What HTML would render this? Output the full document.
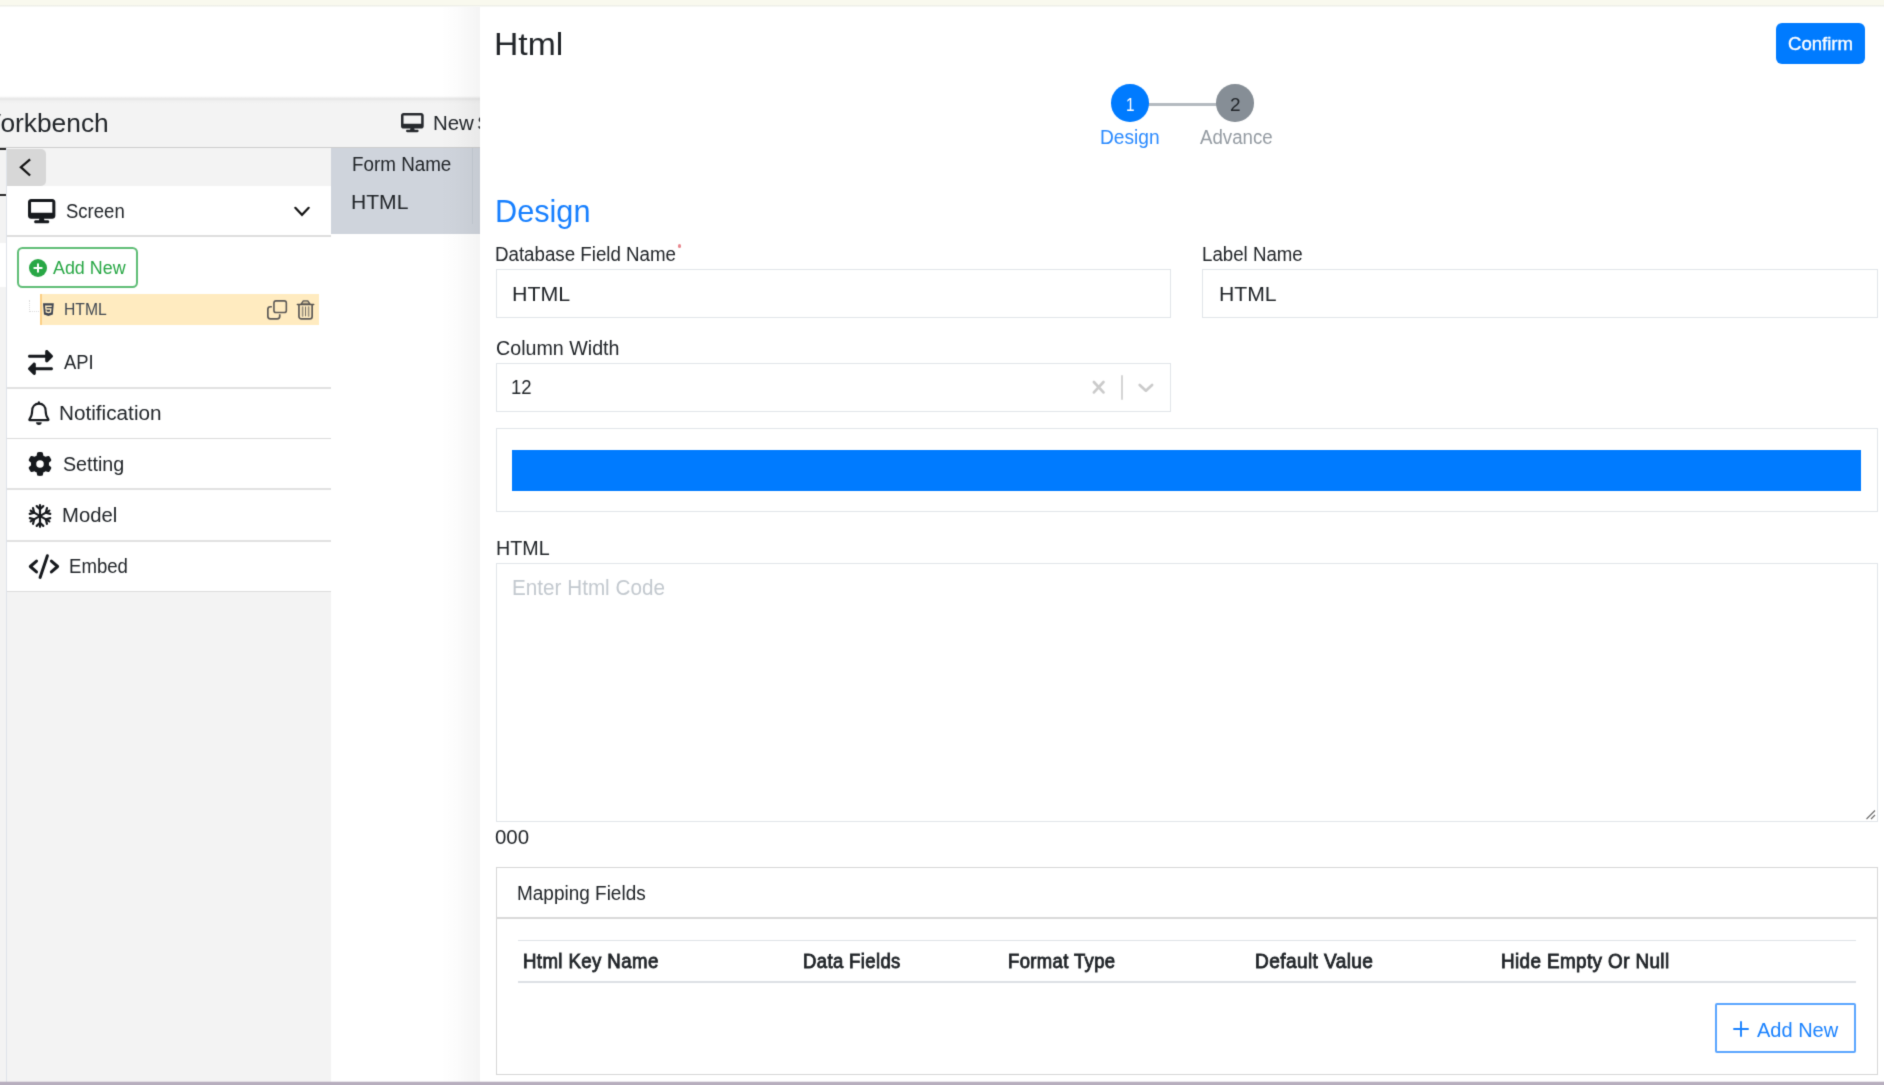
<!DOCTYPE html>
<html><head><meta charset="utf-8"><title>Html</title>
<style>
*{margin:0;padding:0;box-sizing:border-box}
html,body{width:1884px;height:1085px;overflow:hidden;background:#fff;font-family:"Liberation Sans",sans-serif}
body{position:relative;filter:url(#soft)}
.a{position:absolute}
.t{position:absolute;white-space:nowrap;line-height:1;display:inline-block;transform-origin:0 50%}
svg{position:absolute;overflow:visible}

</style></head>
<body>
<svg width="0" height="0" style="position:absolute;left:0;top:0"><defs><filter id="soft" x="0" y="0" width="100%" height="100%" filterUnits="objectBoundingBox" color-interpolation-filters="sRGB"><feConvolveMatrix order="3" kernelMatrix="0.0169 0.0962 0.0169 0.0962 0.5476 0.0962 0.0169 0.0962 0.0169" divisor="1" edgeMode="duplicate" preserveAlpha="true"/></filter></defs></svg>
<!-- ===== left / background app ===== -->
<div class="a" style="left:0;top:0;width:1884px;height:5px;background:#f9f9ee"></div>
<div class="a" style="left:0;top:5px;width:1884px;height:2px;background:linear-gradient(#ebece3,#fafaf8)"></div>

<!-- workbench bar -->
<div class="a" style="left:0;top:95.5px;width:480px;height:8.5px;background:linear-gradient(#fff 0%,#f1f1f1 20%,#e5e5e5 37%,#ececec 52%,#f0f0f0 66%,#f3f3f3 100%)"></div>
<div class="a" style="left:0;top:104px;width:480px;height:44px;background:#f3f3f3"></div>
<div class="a" style="left:0;top:146.9px;width:480px;height:1.4px;background:#cdcdcd"></div>

<!-- far-left strip -->
<div class="a" style="left:0;top:148px;width:7px;height:937px;background:#f3f3f3"></div>
<div class="a" style="left:0;top:243.4px;width:7px;height:43.8px;background:#fff"></div>
<div class="a" style="left:0;top:148px;width:5.5px;height:2px;background:#2a2a2a"></div>
<div class="a" style="left:0;top:194.2px;width:5.5px;height:2px;background:#2a2a2a"></div>
<div class="a" style="left:6px;top:148px;width:1px;height:937px;background:#dfe3ea"></div>

<!-- sidebar -->
<div class="a" style="left:7px;top:148px;width:324px;height:38px;background:#f3f3f3"></div>
<div class="a" style="left:7px;top:148.5px;width:38.5px;height:37px;background:#d7d7d7;border-radius:0 5px 5px 0"></div>
<svg style="left:18px;top:157px" width="16" height="21" viewBox="0 0 16 21"><polyline points="12.1,2.3 2.9,10.2 12.1,18.5" fill="none" stroke="#151515" stroke-width="2.3" stroke-linecap="butt" stroke-linejoin="miter"/></svg>

<div class="a" style="left:7px;top:185.5px;width:324px;height:50px;background:#fff"></div>
<div class="a" style="left:7px;top:235px;width:324px;height:2px;background:#dedede"></div>
<!-- sidebar grey bottom -->
<div class="a" style="left:7px;top:592px;width:324px;height:493px;background:#f3f3f3"></div>
<!-- row borders -->
<div class="a" style="left:7px;top:386.5px;width:324px;height:2px;background:#e1e1e1"></div>
<div class="a" style="left:7px;top:437.5px;width:324px;height:1.5px;background:#dcdcdc"></div>
<div class="a" style="left:7px;top:488.2px;width:324px;height:2px;background:#e1e1e1"></div>
<div class="a" style="left:7px;top:540px;width:324px;height:2px;background:#e1e1e1"></div>
<div class="a" style="left:7px;top:590.5px;width:324px;height:1.5px;background:#dcdcdc"></div>

<!-- form name panel -->
<div class="a" style="left:331px;top:148px;width:149px;height:86px;background:#cfd4dc"></div>
<div class="a" style="left:472px;top:148px;width:1px;height:76px;background:#c4cad3"></div>

<!-- Add New (sidebar) -->
<div class="a" style="left:17.3px;top:246.8px;width:120.4px;height:41px;border:2px solid #5fbd76;border-radius:5.5px;background:#fff"></div>
<!-- tree item -->
<div class="a" style="left:40.5px;top:294.2px;width:278.5px;height:30.8px;background:#ffebc0"></div>
<div class="a" style="left:40.4px;top:294.2px;width:1.9px;height:30.8px;background:#fccf85"></div>
<div class="a" style="left:29.3px;top:299.500px;width:9.700px;height:12.500px;border-left:1px dotted #dcdcdc;border-bottom:1px dotted #dcdcdc"></div>

<!-- monitor (topbar New S) 401-423 -->
<svg style="left:401px;top:112.7px" width="22.700" height="19.200" viewBox="0 0 576 512" preserveAspectRatio="none"><path fill="#26292d" d="M64 0C28.7 0 0 28.7 0 64V352c0 35.3 28.7 64 64 64H240l-10.700 32H160c-17.700 0-32 14.300-32 32s14.300 32 32 32H416c17.700 0 32-14.300 32-32s-14.300-32-32-32H346.700L336 416H512c35.300 0 64-28.700 64-64V64c0-35.300-28.700-64-64-64H64zM512 64V288H64V64H512z"/></svg>
<!-- monitor (Screen row) x 27.9-55.2, y 199-223.3 -->
<svg style="left:27.9px;top:199px" width="27.4" height="24.3" viewBox="0 0 576 512"><path fill="#16191d" d="M64 0C28.7 0 0 28.7 0 64V352c0 35.3 28.7 64 64 64H240l-10.700 32H160c-17.700 0-32 14.300-32 32s14.300 32 32 32H416c17.700 0 32-14.300 32-32s-14.300-32-32-32H346.700L336 416H512c35.300 0 64-28.700 64-64V64c0-35.300-28.700-64-64-64H64zM512 64V288H64V64H512z"/></svg>
<!-- chevron down x 294.5-309.5, y 207-216 -->
<svg style="left:293px;top:205px" width="18" height="13" viewBox="0 0 18 13"><polyline points="2.3,2.8 9,9.8 15.700,2.8" fill="none" stroke="#151515" stroke-width="2.2" stroke-linecap="round" stroke-linejoin="miter"/></svg>
<!-- plus circle x 29.25-47, y 258.75-277 -->
<svg style="left:29.2px;top:258.8px" width="18" height="18" viewBox="0 0 18 18"><circle cx="9" cy="9" r="9" fill="#28a745"/><path d="M9 5.300V12.700M5.300 9H12.700" stroke="#fff" stroke-width="2" stroke-linecap="round"/></svg>
<!-- html5 shield x 43-53.75, y 303.25-316.25 -->
<svg style="left:43px;top:303.2px" width="10.8" height="13.2" viewBox="0 0 384 448"><path fill="#3f4552" d="M0 0l34.900 395.800L191.500 448l157.600-52.200L384 0H0zm308.200 127.900H124.400l4.100 49.400h175.600l-13.600 148.400-97.900 27v.3h-1.100l-98.700-27.300-6-75.800h47.700L138 288l53.500 14.500 53.700-14.500 6-62.200H84.300L71.500 80.200h241.600l-4.900 47.700z"/></svg>
<!-- copy x 267.5-286.75, y 301.25-319.5 -->
<svg style="left:266.9px;top:300px" width="20.2" height="19.8" viewBox="0 0 20.2 19.8"><rect x="6.950" y="0.850" width="12.400" height="11.700" rx="2.100" fill="none" stroke="#5d5a57" stroke-width="1.600"/><path d="M4.900 6.750H3.400A2.550 2.550 0 0 0 0.850 9.300V16.300A2.550 2.550 0 0 0 3.400 18.850H10.200A2.550 2.550 0 0 0 12.750 16.300V14.200" fill="none" stroke="#5d5a57" stroke-width="1.700"/></svg>
<!-- trash x 297.5-313, y 300.75-319 -->
<svg style="left:297px;top:300px" width="17" height="19.800" viewBox="0 0 17 19.800"><path d="M3.900 4.300L6.300 0.900H10.800L13.200 4.300Z" stroke="#5d5a57" stroke-width="1.400" fill="rgba(90,80,60,0.250)" stroke-linejoin="round"/><path d="M0.400 4.450H16.700" stroke="#55524f" stroke-width="1.500" fill="none" stroke-linecap="round"/><path d="M1.950 4.600V16.400A2.450 2.450 0 0 0 4.400 18.850H12.700A2.450 2.450 0 0 0 15.150 16.400V4.600" stroke="#5d5a57" stroke-width="1.700" fill="none"/><path d="M5.600 7V15.900M11.600 7V15.900" stroke="#9a917f" stroke-width="1.700" fill="none" stroke-linecap="round"/><path d="M8.550 7V15.900" stroke="#5d5a57" stroke-width="0.900" fill="none" stroke-linecap="round"/></svg>
<!-- exchange arrows x 27.5-52.5, y 350-373.75 -->
<svg style="left:27.5px;top:349.6px" width="25" height="25" viewBox="0 0 512 512"><path fill="#16191d" d="M32 96l320 0V32c0-12.900 7.800-24.600 19.800-29.600s25.700-2.200 34.900 6.900l96 96c6 6 9.400 14.100 9.400 22.600s-3.400 16.600-9.400 22.600l-96 96c-9.200 9.200-22.900 11.900-34.900 6.900s-19.800-16.600-19.800-29.600V160L32 160c-17.700 0-32-14.300-32-32s14.300-32 32-32zM480 352c17.700 0 32 14.300 32 32s-14.300 32-32 32l-320 0v64c0 12.900-7.800 24.600-19.800 29.600s-25.700 2.200-34.900-6.900l-96-96c-6-6-9.400-14.100-9.400-22.600s3.400-16.600 9.400-22.600l96-96c9.200-9.200 22.900-11.900 34.900-6.900s19.800 16.600 19.800 29.600l0 64 320 0z"/></svg>
<!-- bell x 27.5-49.25, y 401-425 -->
<svg style="left:27.500px;top:401px" width="21.800" height="24.500" viewBox="0 0 21.800 24.500"><g fill="none" stroke="#16191d" stroke-linecap="round" stroke-linejoin="round"><path stroke-width="2.100" d="M10.900 2.400V1.200"/><path stroke-width="2.100" d="M10.900 2.600C6.700 2.600 4.200 5.700 4.200 9.600C4.200 14.400 2.900 16.500 1.400 18.300C1.200 18.600 1.300 19.100 1.800 19.100H20C20.500 19.100 20.600 18.600 20.400 18.300C18.900 16.500 17.600 14.400 17.600 9.600C17.600 5.700 15.100 2.600 10.900 2.600Z"/></g><path d="M8.100 21.300H13.700A2.800 2.800 0 0 1 8.100 21.300Z" fill="#16191d"/></svg>
<!-- gear x 28-52, y 452-476 -->
<svg style="left:28px;top:452px" width="24" height="24" viewBox="0 0 512 512"><path fill="#16191d" d="M495.900 166.600c3.200 8.700 .5 18.400-6.400 24.600l-43.300 39.400c1.100 8.300 1.700 16.800 1.700 25.400s-.6 17.100-1.700 25.400l43.300 39.400c6.900 6.200 9.600 15.900 6.400 24.600c-4.400 11.900-9.700 23.300-15.800 34.300l-4.700 8.100c-6.600 11-14 21.400-22.100 31.200c-5.900 7.200-15.700 9.600-24.500 6.800l-55.700-17.700c-13.400 10.300-28.200 18.900-44 25.400l-12.500 57.100c-2 9.100-9 16.300-18.200 17.800c-13.800 2.300-28 3.500-42.500 3.500s-28.700-1.200-42.500-3.500c-9.200-1.500-16.200-8.700-18.200-17.800l-12.500-57.100c-15.800-6.500-30.600-15.100-44-25.400L83.100 425.900c-8.800 2.800-18.600 .3-24.500-6.800c-8.100-9.800-15.500-20.200-22.100-31.200l-4.700-8.100c-6.100-11-11.400-22.400-15.800-34.300c-3.200-8.700-.5-18.400 6.400-24.600l43.300-39.400C64.600 273.100 64 264.600 64 256s.6-17.100 1.700-25.400L22.400 191.200c-6.900-6.200-9.600-15.900-6.400-24.600c4.400-11.900 9.700-23.300 15.800-34.300l4.700-8.100c6.600-11 14-21.400 22.100-31.200c5.900-7.200 15.700-9.600 24.500-6.800l55.700 17.700c13.400-10.300 28.200-18.900 44-25.400l12.500-57.100c2-9.100 9-16.300 18.200-17.800C227.300 1.200 241.500 0 256 0s28.700 1.200 42.500 3.500c9.200 1.500 16.200 8.700 18.200 17.800l12.500 57.100c15.800 6.500 30.600 15.100 44 25.400l55.700-17.700c8.800-2.800 18.600-.3 24.500 6.800c8.100 9.800 15.500 20.200 22.100 31.200l4.700 8.100c6.100 11 11.400 22.400 15.800 34.300zM256 336a80 80 0 1 0 0-160 80 80 0 1 0 0 160z"/></svg>
<!-- snowflake x 28-51.75, y 503.75-527.5 -->
<svg style="left:28px;top:503.700px" width="24" height="24" viewBox="-12 -12 24 24"><g fill="none" stroke="#16191d" stroke-width="2.200" stroke-linecap="round" stroke-linejoin="round"><g id="arm"><path d="M0 -10.800V10.800"/><path d="M-3.300 -9.900L0 -6.800L3.300 -9.900"/><path d="M-3.300 9.900L0 6.800L3.300 9.900"/></g><use href="#arm" transform="rotate(60)"/><use href="#arm" transform="rotate(120)"/></g></svg>
<!-- code x 27.5-58.75, y 554-578.75 -->
<svg style="left:27.500px;top:554px" width="31.500" height="25" viewBox="0 0 31.500 25"><g fill="none" stroke="#16191d" stroke-width="3" stroke-linecap="round" stroke-linejoin="round"><path d="M8.500 7.100L2.300 12.500L8.500 17.900"/><path d="M23.400 7.100L29.600 12.500L23.400 17.900"/><path d="M19.400 1.700L12.100 23.400"/></g></svg>

<span class="t" id="wb" style="left:-23.70px;top:110.47px;font-size:26.5px;color:#212529;font-weight:400;transform:scaleX(0.9939);">Workbench</span>
<span class="t" id="news" style="left:432.76px;top:113.07px;font-size:20px;color:#212529;font-weight:400;transform:scaleX(1.0211);">New</span>
<span class="t" id="news2" style="left:476.63px;top:113.07px;font-size:20px;color:#212529;font-weight:400;transform:scaleX(1.0667);">S</span>
<span class="t" id="fn" style="left:351.57px;top:154.64px;font-size:19.5px;color:#212529;font-weight:400;transform:scaleX(0.9650);">Form Name</span>
<span class="t" id="fh" style="left:351.49px;top:190.62px;font-size:21px;color:#212529;font-weight:400;transform:scaleX(1.0045);">HTML</span>
<span class="t" id="scr" style="left:66.32px;top:201.47px;font-size:20px;color:#212529;font-weight:400;transform:scaleX(0.9262);">Screen</span>
<span class="t" id="an" style="left:52.80px;top:259.41px;font-size:18px;color:#28a745;font-weight:400;transform:scaleX(0.9932);">Add New</span>
<span class="t" id="th" style="left:64.24px;top:302.49px;font-size:15.6px;color:#414852;font-weight:400;transform:scaleX(1.0061);">HTML</span>
<span class="t" id="api" style="left:64.00px;top:352.22px;font-size:20px;color:#212529;font-weight:400;transform:scaleX(0.9194);">API</span>
<span class="t" id="not" style="left:58.93px;top:402.97px;font-size:20px;color:#212529;font-weight:400;transform:scaleX(1.0365);">Notification</span>
<span class="t" id="set" style="left:63.02px;top:454.22px;font-size:20px;color:#212529;font-weight:400;transform:scaleX(0.9833);">Setting</span>
<span class="t" id="mod" style="left:62.47px;top:505.47px;font-size:20px;color:#212529;font-weight:400;transform:scaleX(1.0137);">Model</span>
<span class="t" id="emb" style="left:68.64px;top:556.47px;font-size:20px;color:#212529;font-weight:400;transform:scaleX(0.9300);">Embed</span>

<!-- ===== right drawer ===== -->
<div class="a" style="left:440px;top:7px;width:40px;height:1078px;background:linear-gradient(90deg,rgba(0,0,0,0),rgba(0,0,0,0.012) 40%,rgba(0,0,0,0.045))"></div>
<div class="a" style="left:479.5px;top:7px;width:1404.5px;height:1078px;background:#fff"></div>

<!-- confirm -->
<div class="a" style="left:1775.5px;top:23px;width:89px;height:40.5px;background:#007bff;border-radius:6px"></div>

<!-- stepper -->
<div class="a" style="left:1140px;top:103px;width:90px;height:2.5px;background:#b4bac0"></div>
<div class="a" style="left:1111.25px;top:84.25px;width:37.5px;height:37.5px;border-radius:50%;background:#007bff"></div>
<div class="a" style="left:1216.25px;top:84.25px;width:37.5px;height:37.5px;border-radius:50%;background:#868e96"></div>

<!-- inputs -->
<div class="a" style="left:496px;top:269px;width:675px;height:48.5px;border:1.5px solid #e1e5e9"></div>
<div class="a" style="left:1202px;top:269px;width:675.5px;height:48.5px;border:1.5px solid #e1e5e9"></div>
<div class="a" style="left:496px;top:363px;width:675px;height:48.5px;border:1.5px solid #e1e5e9"></div>
<div class="a" style="left:1121.4px;top:374.5px;width:2px;height:25.600px;background:#d5d5d5;border-radius:1px"></div>
<!-- red asterisk -->
<div class="a" style="left:677.5px;top:244px;width:3.5px;height:3.5px;background:#e8868d;border-radius:50%"></div>

<!-- blue bar box -->
<div class="a" style="left:496px;top:427.5px;width:1381.5px;height:84.5px;border:1.5px solid #e1e5e9"></div>
<div class="a" style="left:512px;top:449.5px;width:1348.5px;height:41.2px;background:#007bff"></div>

<!-- textarea -->
<div class="a" style="left:496px;top:563px;width:1381.5px;height:259px;border:1.5px solid #e1e5e9"></div>
<svg style="left:1864px;top:808px" width="12" height="12" viewBox="0 0 12 12"><path d="M2.5 11 L11 2.5 M7 11 L11 7" stroke="#6b6b6b" stroke-width="1.1" fill="none"/></svg>

<!-- mapping card -->
<div class="a" style="left:496px;top:867px;width:1381.5px;height:208px;border:1.5px solid #d6d6d6"></div>
<div class="a" style="left:496px;top:917px;width:1381.5px;height:1.8px;background:#d9d9d9"></div>
<div class="a" style="left:517.5px;top:939.8px;width:1338px;height:1.3px;background:#dfe3e7"></div>
<div class="a" style="left:517.5px;top:981px;width:1338px;height:2px;background:#dce0e5"></div>
<!-- add new btn -->
<div class="a" style="left:1714.5px;top:1003.3px;width:141.5px;height:50px;border:2px solid #5aa5ff;border-radius:2px"></div>

<!-- react-select X -->
<svg style="left:1091.600px;top:380px" width="13.400" height="14.400" viewBox="0 0 13.400 14.400"><path d="M1.900 2L11.500 12.400M11.500 2L1.900 12.400" stroke="#cbcbcb" stroke-width="2.700" fill="none" stroke-linecap="round"/></svg>
<!-- chevron -->
<svg style="left:1138.400px;top:383.200px" width="15.800" height="9.600" viewBox="0 0 15.800 9.600"><polyline points="1.700,1.900 7.900,7.700 14.100,1.900" fill="none" stroke="#cbcbcb" stroke-width="2.700" stroke-linecap="round" stroke-linejoin="round"/></svg>
<!-- plus -->
<svg style="left:1732.500px;top:1020.800px" width="16" height="16" viewBox="0 0 16 16"><path d="M8 0.300V15.700M0.300 8H15.700" stroke="#1a82ff" stroke-width="1.900" fill="none"/></svg>


<!-- bottom strip -->
<div class="a" style="left:0;top:1080px;width:1884px;height:5px;background:linear-gradient(rgba(183,174,190,0) 0%,rgba(183,174,190,0) 22%,rgba(183,174,190,1) 50%,#b7aebe 100%)"></div>

<!-- texts -->
<span class="t" id="ttl" style="left:494.29px;top:29.08px;font-size:30.5px;color:#212529;font-weight:400;transform:scaleX(1.1059);">Html</span>
<span class="t" id="cfm" style="left:1788.00px;top:35.49px;font-size:18.5px;color:#ffffff;font-weight:400;transform:scaleX(1.0040);-webkit-text-stroke:0.35px #ffffff">Confirm</span>
<span class="t" id="s1" style="left:1126.44px;top:95.07px;font-size:19px;color:#ffffff;font-weight:400;transform:scaleX(0.8056);">1</span>
<span class="t" id="s2" style="left:1230.00px;top:95.07px;font-size:19px;color:#212529;font-weight:400;transform:scaleX(1.0000);">2</span>
<span class="t" id="sd" style="left:1100.28px;top:128.39px;font-size:19.5px;color:#2a8aff;font-weight:400;transform:scaleX(0.9828);">Design</span>
<span class="t" id="sa" style="left:1200.25px;top:128.39px;font-size:19.5px;color:#949ba2;font-weight:400;transform:scaleX(0.9567);">Advance</span>
<span class="t" id="dh" style="left:495.24px;top:195.83px;font-size:30.5px;color:#167fff;font-weight:400;transform:scaleX(1.0055);">Design</span>
<span class="t" id="l1" style="left:495.33px;top:245.14px;font-size:19.5px;color:#212529;font-weight:400;transform:scaleX(0.9597);">Database Field Name</span>
<span class="t" id="l2" style="left:1202.08px;top:245.14px;font-size:19.5px;color:#212529;font-weight:400;transform:scaleX(0.9583);">Label Name</span>
<span class="t" id="i1" style="left:511.92px;top:283.80px;font-size:20.5px;color:#212529;font-weight:400;transform:scaleX(1.0425);">HTML</span>
<span class="t" id="i2" style="left:1218.93px;top:283.80px;font-size:20.5px;color:#212529;font-weight:400;transform:scaleX(1.0330);">HTML</span>
<span class="t" id="l3" style="left:496.24px;top:339.39px;font-size:19.5px;color:#212529;font-weight:400;transform:scaleX(1.0083);">Column Width</span>
<span class="t" id="v12" style="left:511.30px;top:378.39px;font-size:19.5px;color:#212529;font-weight:400;transform:scaleX(0.9500);">12</span>
<span class="t" id="l4" style="left:495.98px;top:539.39px;font-size:19.5px;color:#212529;font-weight:400;transform:scaleX(1.0098);">HTML</span>
<span class="t" id="ph" style="left:511.88px;top:577.32px;font-size:21.6px;color:#c3c9cf;font-weight:400;transform:scaleX(0.9580);">Enter Html Code</span>
<span class="t" id="z" style="left:495.45px;top:827.89px;font-size:19.5px;color:#212529;font-weight:400;transform:scaleX(1.0484);">000</span>
<span class="t" id="mf" style="left:517.05px;top:883.64px;font-size:19.5px;color:#212529;font-weight:400;transform:scaleX(0.9731);">Mapping Fields</span>
<span class="t" id="h1" style="left:523.29px;top:952.39px;font-size:19.5px;color:#212529;font-weight:400;transform:scaleX(0.9571);-webkit-text-stroke:0.8px #212529;letter-spacing:0.4px">Html Key Name</span>
<span class="t" id="h2" style="left:802.55px;top:952.39px;font-size:19.5px;color:#212529;font-weight:400;transform:scaleX(0.9480);-webkit-text-stroke:0.8px #212529;letter-spacing:0.4px">Data Fields</span>
<span class="t" id="h3" style="left:1008.30px;top:952.39px;font-size:19.5px;color:#212529;font-weight:400;transform:scaleX(0.9464);-webkit-text-stroke:0.8px #212529;letter-spacing:0.4px">Format Type</span>
<span class="t" id="h4" style="left:1254.52px;top:952.39px;font-size:19.5px;color:#212529;font-weight:400;transform:scaleX(0.9790);-webkit-text-stroke:0.8px #212529;letter-spacing:0.4px">Default Value</span>
<span class="t" id="h5" style="left:1500.53px;top:952.39px;font-size:19.5px;color:#212529;font-weight:400;transform:scaleX(0.9680);-webkit-text-stroke:0.8px #212529;letter-spacing:0.4px">Hide Empty Or Null</span>
<span class="t" id="an2" style="left:1757.00px;top:1018.62px;font-size:21px;color:#1a82ff;font-weight:400;transform:scaleX(0.9529);">Add New</span>
</body></html>
